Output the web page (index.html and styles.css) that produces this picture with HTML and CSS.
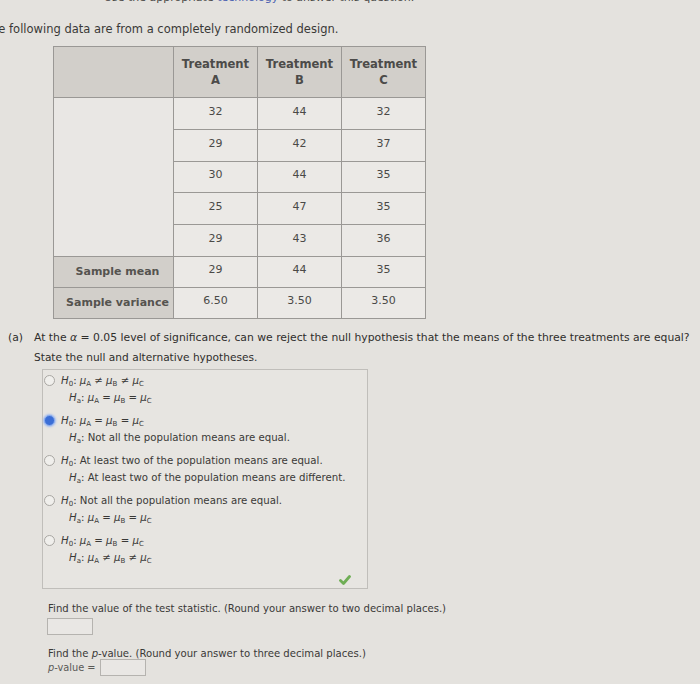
FILE: index.html
```html
<!DOCTYPE html>
<html>
<head>
<meta charset="utf-8">
<link rel="stylesheet" href="styles.css">
</head>
<body>
<div class="page">
  <p class="cut-top">Use the appropriate <span class="link">technology</span> to answer this question.</p>
  <p class="intro">The following data are from a completely randomized design.</p>
  <table class="data">
    <tr class="head">
      <th class="corner"></th>
      <th>Treatment<br>A</th>
      <th>Treatment<br>B</th>
      <th>Treatment<br>C</th>
    </tr>
    <tr><td class="blank" rowspan="5"></td><td>32</td><td>44</td><td>32</td></tr>
    <tr><td>29</td><td>42</td><td>37</td></tr>
    <tr><td>30</td><td>44</td><td>35</td></tr>
    <tr><td>25</td><td>47</td><td>35</td></tr>
    <tr><td>29</td><td>43</td><td>36</td></tr>
    <tr class="stat"><th class="label">Sample mean</th><td>29</td><td>44</td><td>35</td></tr>
    <tr class="stat"><th class="label">Sample variance</th><td>6.50</td><td>3.50</td><td>3.50</td></tr>
  </table>

  <div class="question">
    <span class="qnum">(a)</span>
    <span class="qtext">At the <i class="m">α</i> = 0.05 level of significance, can we reject the null hypothesis that the means of the three treatments are equal?</span>
  </div>
  <p class="sub">State the null and alternative hypotheses.</p>

  <div class="options">
    <div class="opt">
      <span class="radio"></span>
      <div class="lines">
        <div class="h0"><i>H</i><sub>0</sub>: <i>μ</i><sub>A</sub> ≠ <i>μ</i><sub>B</sub> ≠ <i>μ</i><sub>C</sub></div>
        <div class="ha"><i>H</i><sub>a</sub>: <i>μ</i><sub>A</sub> = <i>μ</i><sub>B</sub> = <i>μ</i><sub>C</sub></div>
      </div>
    </div>
    <div class="opt">
      <span class="radio on"></span>
      <div class="lines">
        <div class="h0"><i>H</i><sub>0</sub>: <i>μ</i><sub>A</sub> = <i>μ</i><sub>B</sub> = <i>μ</i><sub>C</sub></div>
        <div class="ha"><i>H</i><sub>a</sub>: Not all the population means are equal.</div>
      </div>
    </div>
    <div class="opt">
      <span class="radio"></span>
      <div class="lines">
        <div class="h0"><i>H</i><sub>0</sub>: At least two of the population means are equal.</div>
        <div class="ha"><i>H</i><sub>a</sub>: At least two of the population means are different.</div>
      </div>
    </div>
    <div class="opt">
      <span class="radio"></span>
      <div class="lines">
        <div class="h0"><i>H</i><sub>0</sub>: Not all the population means are equal.</div>
        <div class="ha"><i>H</i><sub>a</sub>: <i>μ</i><sub>A</sub> = <i>μ</i><sub>B</sub> = <i>μ</i><sub>C</sub></div>
      </div>
    </div>
    <div class="opt">
      <span class="radio"></span>
      <div class="lines">
        <div class="h0"><i>H</i><sub>0</sub>: <i>μ</i><sub>A</sub> = <i>μ</i><sub>B</sub> = <i>μ</i><sub>C</sub></div>
        <div class="ha"><i>H</i><sub>a</sub>: <i>μ</i><sub>A</sub> ≠ <i>μ</i><sub>B</sub> ≠ <i>μ</i><sub>C</sub></div>
      </div>
    </div>
    <svg class="check" width="12" height="10" viewBox="0 0 12 10"><path d="M1.5 5.5 L4.5 8.5 L10.5 1.5" fill="none" stroke="#6fae55" stroke-width="2.8" stroke-linecap="round" stroke-linejoin="round"/></svg>
  </div>

  <p class="find">Find the value of the test statistic. (Round your answer to two decimal places.)</p>
  <div class="answer"></div>

  <p class="find second">Find the <i>p</i>-value. (Round your answer to three decimal places.)</p>
  <div class="pline"><span><i>p</i>-value =</span><span class="answer inline"></span></div>
</div>
</body>
</html>
```

FILE: styles.css
```css
html, body {
  margin: 0;
  padding: 0;
}
body {
  background: #e4e2de;
  font-family: "DejaVu Sans", Verdana, sans-serif;
  color: #3b3a38;
  width: 700px;
  height: 684px;
  overflow: hidden;
}
.page {
  position: relative;
}
p { margin: 0; }

.cut-top {
  margin-top: -9px;
  padding-left: 104px;
  font-size: 11px;
  line-height: 13px;
  color: #4a4a48;
}
.link { color: #4a5fb0; }

.intro {
  margin-top: 18px;
  margin-left: -16px;
  font-size: 11.5px;
  line-height: 14px;
  color: #3a3937;
}

.data {
  margin-top: 10px;
  margin-left: 53px;
  border-collapse: collapse;
  border: 1px solid #8d8b88;
  font-size: 11px;
}
.data th, .data td {
  border: 1px solid #9a9895;
  padding: 0;
  text-align: center;
}
.data .head th {
  background: #d2cfca;
  height: 50px;
  width: 83px;
  font-size: 11.6px;
  font-weight: bold;
  color: #4c4b49;
  line-height: 16px;
  vertical-align: middle;
}
.data .head th.corner { width: 119px; }
.data td {
  background: #ebe9e6;
  height: 31.8px;
  color: #4a4947;
  vertical-align: middle;
  padding-bottom: 4px;
  box-sizing: border-box;
}
.data .stat td { height: 31px; }
.data td.blank { background: #e9e7e4; }
.data th.label {
  background: #d2cfca;
  color: #55534f;
  font-weight: bold;
  text-align: center;
  padding-left: 8px;
  height: 31px;
  box-sizing: border-box;
}

.question {
  display: flex;
  margin-top: 12px;
  font-size: 10.8px;
  line-height: 14px;
  color: #2f2e2c;
}
.qnum { width: 34px; padding-left: 8px; box-sizing: border-box; flex: none; }
.qtext { white-space: nowrap; }
.m { font-style: italic; }

.sub {
  margin-top: 5px;
  margin-left: 34px;
  font-size: 10.6px;
  line-height: 14px;
  color: #2f2e2c;
}

.options {
  position: relative;
  margin-top: 5px;
  margin-left: 42px;
  width: 326px;
  height: 220px;
  border: 1px solid #c0beba;
  box-sizing: border-box;
  background: #e7e5e1;
  padding-top: 2px;
  font-size: 10.2px;
  color: #3a3937;
}
.opt {
  display: flex;
  align-items: flex-start;
  margin-bottom: 6px;
}
.radio {
  flex: none;
  width: 9px;
  height: 9px;
  border: 1px solid #a9a7a3;
  border-radius: 50%;
  background: #f0efec;
  margin: 3px 6px 0 1px;
}
.radio.on {
  background: #3b6ed6;
  border-color: #8fb0ee;
  box-shadow: 0 0 2px 1px #9fbaf0;
}
.lines { line-height: 17px; }
.ha { padding-left: 8px; }
.lines i { font-style: italic; }
.lines sub { font-size: 7px; vertical-align: -2px; line-height: 0; }
.check {
  position: absolute;
  right: 16px;
  bottom: 3px;
}

.find {
  margin-top: 13px;
  margin-left: 48px;
  font-size: 10.1px;
  line-height: 13px;
  color: #3a3937;
}
.find.second { margin-top: 12px; }
.answer {
  margin-left: 47px;
  margin-top: 3px;
  width: 46px;
  height: 17px;
  border: 1px solid #b5b3af;
  background: #e9e7e4;
  box-sizing: border-box;
}
.pline {
  display: flex;
  align-items: center;
  margin-left: 48px;
  margin-top: -1px;
  font-size: 9.8px;
  color: #5a5956;
}
.pline i { font-style: italic; }
.answer.inline { margin: 0 0 0 4px; display: inline-block; }
```
